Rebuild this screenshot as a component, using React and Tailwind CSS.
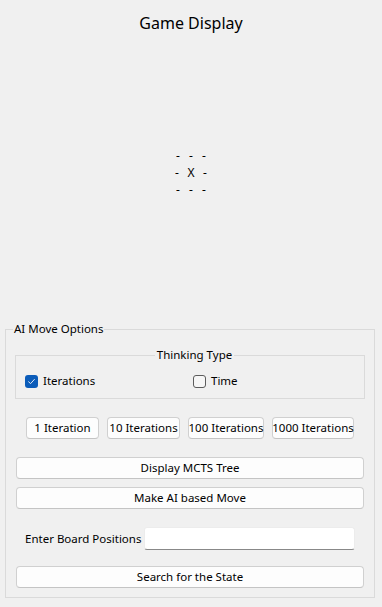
import React from "react";

function Btn({ className = "", children }) {
  return (
    <div
      className={
        "h-[22px] flex items-center justify-center whitespace-nowrap bg-[#fdfdfd] border border-[#d0d0d0] border-b-[#c4c4c4] rounded-[4px] leading-none " +
        className
      }
    >
      {children}
    </div>
  );
}

function Check({ checked }) {
  if (checked) {
    return (
      <div className="w-[13px] h-[13px] rounded-[3px] bg-[#0b5cb9] flex items-center justify-center">
        <svg width="9" height="9" viewBox="0 0 9 9" fill="none">
          <path d="M1.6 4.8 L3.6 6.6 L7.4 2.4" stroke="#dfe9f6" strokeWidth="1" strokeLinecap="round" strokeLinejoin="round" />
        </svg>
      </div>
    );
  }
  return <div className="w-[13px] h-[13px] rounded-[3px] border border-[#5c5c5c] bg-[#f6f6f6]" />;
}

export default function App() {
  return (
    <div className="w-[382px] h-[607px] bg-[#f0f0f0] text-black text-[11.5px] font-['Segoe_UI','Noto_Sans',sans-serif] flex flex-col overflow-hidden">
      <div className="h-[44px] flex items-center justify-center text-[16px] pt-[1px]">Game Display</div>
      <div className="h-[256px] flex items-center justify-center">
        <div className="flex flex-col items-center leading-[17px] text-[12px]">
          <div className="grid grid-cols-[13px_13px_13px] text-center"><span>-</span><span>-</span><span>-</span></div>
          <div className="grid grid-cols-[14px_14px_14px] text-center"><span>-</span><span>X</span><span>-</span></div>
          <div className="grid grid-cols-[13px_13px_13px] text-center"><span>-</span><span>-</span><span>-</span></div>
        </div>
      </div>
      <fieldset className="ml-[5px] w-[370px] min-w-0 mt-[21px] border border-[#dadada] px-[9px] pb-[9px]">
        <legend className="ml-[-2px] px-[1px] leading-[16px] whitespace-nowrap">AI Move Options</legend>
        <fieldset className="mt-[10px] min-w-0 border border-[#dadada] pl-[9px] pt-[8px] pb-[7px]">
          <legend className="mx-auto px-[2px] leading-[16px] whitespace-nowrap">Thinking Type</legend>
          <div className="grid grid-cols-[168px_1fr] h-[20px] items-center">
            <div className="flex items-center gap-[5px]">
              <Check checked />
              <span>Iterations</span>
            </div>
            <div className="flex items-center gap-[5px]">
              <Check checked={false} />
              <span>Time</span>
            </div>
          </div>
        </fieldset>
        <div className="flex justify-center gap-[8px] mt-[18px]">
          <Btn className="w-[73px]">1 Iteration</Btn>
          <Btn className="w-[73px]">10 Iterations</Btn>
          <Btn className="w-[76px]">100 Iterations</Btn>
          <Btn className="w-[82px]">1000 Iterations</Btn>
        </div>
        <Btn className="mx-[1px] mt-[18px]">Display MCTS Tree</Btn>
        <Btn className="mx-[1px] mt-[8px]">Make AI based Move</Btn>
        <div className="flex items-center mt-[18px] pl-[10px]">
          <span className="w-[119px] whitespace-nowrap">Enter Board Positions</span>
          <div className="w-[211px] h-[23px] bg-white border border-[#ececec] border-b-[#888888] rounded-[3px]" />
        </div>
        <Btn className="mx-[1px] mt-[16px]">Search for the State</Btn>
      </fieldset>
    </div>
  );
}
